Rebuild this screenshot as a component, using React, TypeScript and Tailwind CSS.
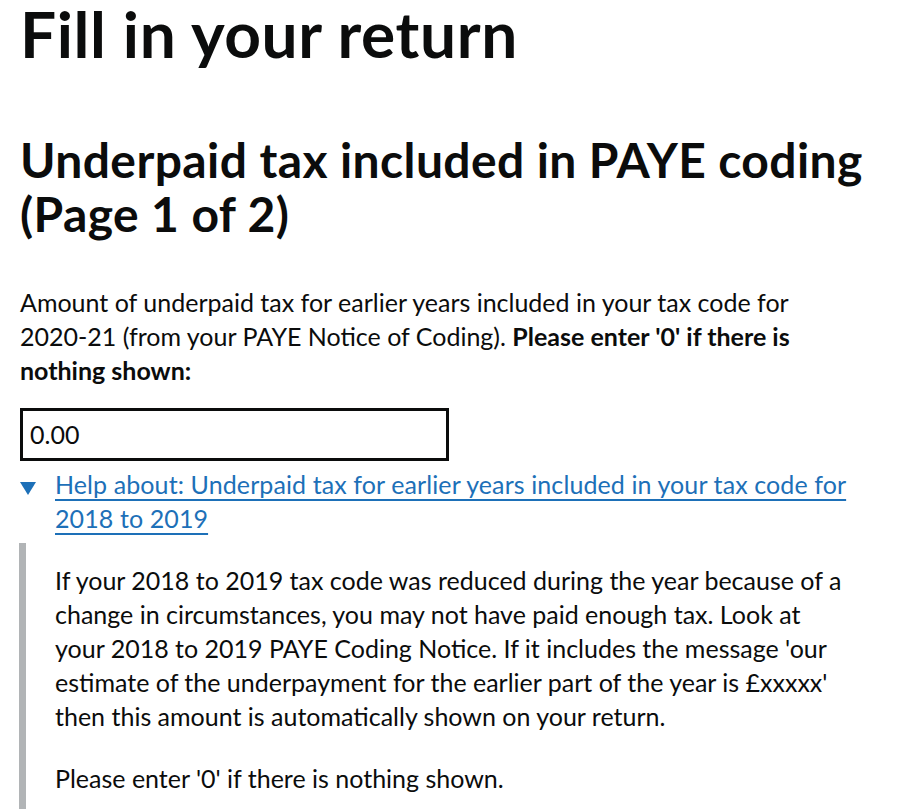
import React from "react";

export default function App() {
  return (
    <div
      className="min-h-[809px] bg-white px-[20px] text-[#0b0c0c]"
      style={{ fontFamily: 'Lato, "Noto Sans", Arial, sans-serif' }}
    >
      <h1 className="m-0 pt-0 text-[64px] font-bold leading-[67px] tracking-[0.6px]">
        Fill in your return
      </h1>
      <h2 className="mt-[66px] text-[48px] font-bold leading-[54px] tracking-[0.4px] whitespace-nowrap">
        Underpaid tax included in PAYE coding
        <br />
        (Page 1 of 2)
      </h2>
      <div className="mt-[44px] text-[25px] leading-[34px] whitespace-nowrap">
        Amount of underpaid tax for earlier years included in your tax code for
        <br />
        2020-21 (from your PAYE Notice of Coding).{" "}
        <span className="font-bold">Please enter '0' if there is</span>
        <br />
        <span className="font-bold">nothing shown:</span>
      </div>
      <div className="mt-[21px] flex h-[53px] w-[429px] items-center border-[3px] border-[#0b0c0c] px-[7px] text-[25px]">
        0.00
      </div>
      <div className="mt-[6px] flex">
        <div className="w-[35px] shrink-0 pt-[15px]">
          <svg width="16" height="13" viewBox="0 0 16 13" className="block">
            <polygon points="0,0 16,0 8,13" fill="#1d70b8" />
          </svg>
        </div>
        <a
          href="#"
          className="text-[25px] leading-[34px] text-[#1d70b8] underline decoration-[2px] underline-offset-[5px] tracking-[0.1px] whitespace-nowrap"
        >
          Help about: Underpaid tax for earlier years included in your tax code for
          <br />
          2018 to 2019
        </a>
      </div>
      <div className="mt-[8px] -ml-[1px] border-l-[7px] border-[#b1b4b6] pl-[29px] pt-[20px] pb-[20px] text-[25px] leading-[34px] whitespace-nowrap">
        <p>
          If your 2018 to 2019 tax code was reduced during the year because of a
          <br />
          change in circumstances, you may not have paid enough tax. Look at
          <br />
          your 2018 to 2019 PAYE Coding Notice. If it includes the message 'our
          <br />
          estimate of the underpayment for the earlier part of the year is £xxxxx'
          <br />
          then this amount is automatically shown on your return.
        </p>
        <p className="mt-[28px]">Please enter '0' if there is nothing shown.</p>
      </div>
    </div>
  );
}
